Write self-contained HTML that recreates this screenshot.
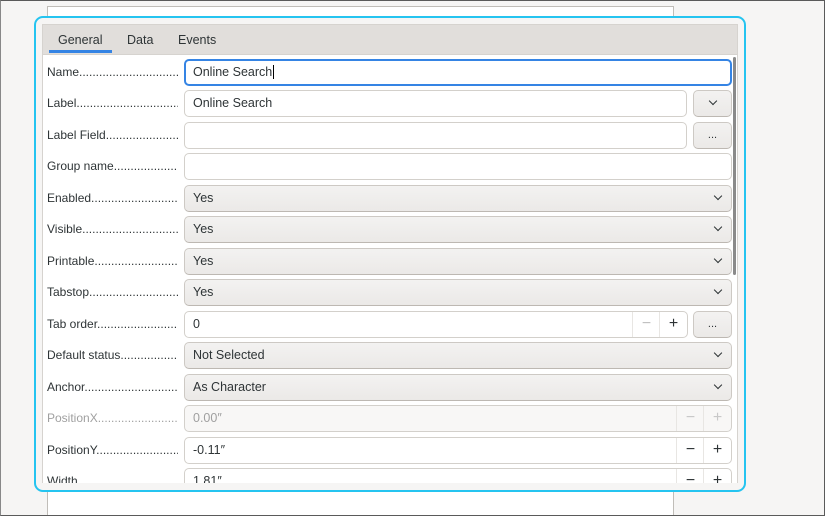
<!DOCTYPE html><html><head><style>
*{box-sizing:border-box;margin:0;padding:0}
body{width:825px;height:516px;background:#f6f5f4;position:relative;overflow:hidden;font-family:"Liberation Sans",sans-serif;font-size:12.5px;color:#2e3436}
.frame{position:absolute;left:0;top:0;width:825px;height:516px;border:1px solid #5a5a5a;border-left-color:#888;z-index:5}
.page{position:absolute;left:47px;top:6px;width:627px;height:510px;background:#fff;border:1px solid #c0bdb8;border-bottom:none}
.dlg{position:absolute;left:34px;top:16px;width:712px;height:476px;border:2px solid #25c4f0;border-radius:9px;background:#f6f5f4}
.tabs{position:absolute;left:42px;top:24px;width:696px;height:31px;background:#e1dedb;border:1px solid #d6d3cf}
.tab{position:absolute;top:8px;font-size:12.5px;color:#2e3436}
.ul{position:absolute;left:49px;top:50px;width:63px;height:3px;background:#3584e4}
.content{position:absolute;left:42px;top:55px;width:696px;height:428px;background:#fff;overflow:hidden;border-left:1px solid #d6d3cf;border-right:1px solid #d6d3cf}
.sb{position:absolute;left:690px;top:2px;width:3px;height:218px;background:#8a8a8a;border-radius:2px}
.lbl{position:absolute;left:4px;width:131px;white-space:nowrap;overflow:hidden;font-size:12px;color:#2e3436}
.lbl.dis{color:#a0a0a0}
.c{position:absolute;height:27px;border:1px solid #d3d0cb;border-radius:5px;background:#fff;padding-left:8px;line-height:25px;font-size:12.5px}
.btn{background:linear-gradient(#f3f2f1,#ebe9e7);border-color:#cdc9c4;border-bottom-color:#bdb8b2}
.chev{position:absolute;right:10px;top:7px;width:6px;height:6px;border-right:1.6px solid #2e3436;border-bottom:1.6px solid #2e3436;transform:rotate(45deg) }
.sp{position:absolute;top:0;width:28px;height:25px;border-left:1px solid #e8e6e3;text-align:center;font-size:16px;line-height:24px;color:#2e3436}
.dis2{background:#f8f7f6;color:#a0a0a0}
</style></head><body>
<div class="frame"></div>
<div class="page"></div>
<div class="dlg"></div>
<div class="tabs"><span class="tab" style="left:15px">General</span><span class="tab" style="left:84px">Data</span><span class="tab" style="left:135px">Events</span></div>
<div class="ul"></div>
<div class="content">
<div class="sb"></div>
<div class="lbl" style="top:10px">Name........................................................</div>
<div class="c" style="left:141px;top:4px;width:548px;border:2px solid #3584e4;line-height:23px;padding-left:7px">Online Search<span style="border-left:1px solid #000;margin-left:1px"></span></div>
<div class="lbl" style="top:41px">Label...........................................................</div>
<div class="c" style="left:141px;top:35px;width:503px">Online Search</div>
<div class="c btn" style="left:650px;top:35px;width:39px"><div class="chev" style="right:15px"></div></div>
<div class="lbl" style="top:73px">Label Field.....................................................</div>
<div class="c" style="left:141px;top:67px;width:503px"></div>
<div class="c btn" style="left:650px;top:67px;width:39px;text-align:center;padding:0;font-size:11px">...</div>
<div class="lbl" style="top:104px">Group name......................................................</div>
<div class="c" style="left:141px;top:98px;width:548px"></div>
<div class="lbl" style="top:136px">Enabled.........................................................</div>
<div class="c btn" style="left:141px;top:130px;width:548px">Yes<div class="chev"></div></div>
<div class="lbl" style="top:167px">Visible..........................................................</div>
<div class="c btn" style="left:141px;top:161px;width:548px">Yes<div class="chev"></div></div>
<div class="lbl" style="top:199px">Printable.......................................................</div>
<div class="c btn" style="left:141px;top:193px;width:548px">Yes<div class="chev"></div></div>
<div class="lbl" style="top:230px">Tabstop.........................................................</div>
<div class="c btn" style="left:141px;top:224px;width:548px">Yes<div class="chev"></div></div>
<div class="lbl" style="top:262px">Tab order.......................................................</div>
<div class="c" style="left:141px;top:256px;width:504px">0<div class="sp" style="right:27px;color:#c0c0c0">−</div><div class="sp" style="right:0">+</div></div>
<div class="c btn" style="left:650px;top:256px;width:39px;text-align:center;padding:0;font-size:11px">...</div>
<div class="lbl" style="top:293px">Default status...................................................</div>
<div class="c btn" style="left:141px;top:287px;width:548px">Not Selected<div class="chev"></div></div>
<div class="lbl" style="top:325px">Anchor..........................................................</div>
<div class="c btn" style="left:141px;top:319px;width:548px">As Character<div class="chev"></div></div>
<div class="lbl dis" style="top:356px">PositionX.......................................................</div>
<div class="c dis2" style="left:141px;top:350px;width:548px">0.00″<div class="sp" style="right:27px;color:#c8c8c8">−</div><div class="sp" style="right:0;color:#c8c8c8">+</div></div>
<div class="lbl" style="top:388px">PositionY.......................................................</div>
<div class="c" style="left:141px;top:382px;width:548px">-0.11″<div class="sp" style="right:27px">−</div><div class="sp" style="right:0">+</div></div>
<div class="lbl" style="top:419px">Width...........................................................</div>
<div class="c" style="left:141px;top:413px;width:548px">1.81″<div class="sp" style="right:27px">−</div><div class="sp" style="right:0">+</div></div>
</div>
</body></html>
